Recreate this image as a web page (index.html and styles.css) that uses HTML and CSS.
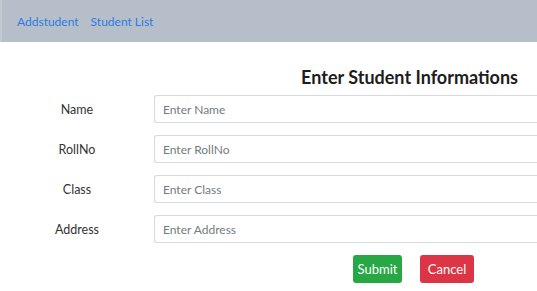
FILE: index.html
```html
<!DOCTYPE html>
<html lang="en">
<head>
    <meta charset="UTF-8">
    <meta name="viewport" content="width=device-width, initial-scale=1.0">
    <title>Add Student</title>
    <link rel="stylesheet" href="styles.css">
</head>
<body>
    <nav class="navbar">
        <a href="#" class="nav-link">Addstudent</a>
        <a href="#" class="nav-link">Student List</a>
    </nav>

    <div class="page">
        <div class="title-row">
            <h4>Enter Student Informations</h4>
        </div>

        <form id="studentForm">
            <div class="form-row">
                <label for="name">Name</label>
                <input type="text" id="name" placeholder="Enter Name">
            </div>
            <div class="form-row">
                <label for="rollno">RollNo</label>
                <input type="text" id="rollno" placeholder="Enter RollNo">
            </div>
            <div class="form-row">
                <label for="class">Class</label>
                <input type="text" id="class" placeholder="Enter Class">
            </div>
            <div class="form-row">
                <label for="address">Address</label>
                <input type="text" id="address" placeholder="Enter Address">
            </div>

            <div class="actions">
                <button type="submit" class="btn btn-success">Submit</button>
                <button type="button" class="btn btn-danger">Cancel</button>
            </div>
        </form>
    </div>
</body>
</html>
```

FILE: styles.css
```css
* {
    margin: 0;
    padding: 0;
    box-sizing: border-box;
}

body {
    font-family: 'Lato', 'Noto Sans', sans-serif;
    font-size: 12.5px;
    color: #333;
    background: white;
}

.navbar {
    height: 42px;
    background: #b6bfc9;
    border-left: 2px solid #c3cad2;
    display: flex;
    align-items: center;
    gap: 12px;
    padding-left: 15px;
}

.nav-link {
    color: #2b7be3;
    text-decoration: none;
    font-size: 12px;
}

.title-row {
    display: flex;
    justify-content: flex-end;
    padding: 23px 19px 0 0;
    height: 53px;
}

.title-row h4 {
    font-size: 18px;
    font-weight: 700;
    color: #1d1d1d;
    line-height: 24px;
}

/* inputs run into the right edge of the window */
.form-row {
    display: grid;
    grid-template-columns: 154px 1fr;
    align-items: center;
    margin-bottom: 12px;
}

.form-row label {
    text-align: center;
    color: #333;
}

.form-row input {
    width: 100%;
    height: 28px;
    padding: 0 8px;
    border: 1px solid #d6dadf;
    border-right: none;
    border-radius: 3px 0 0 3px;
    font-family: inherit;
    font-size: 12px;
    color: #495057;
}

.form-row input::placeholder {
    color: #757b82;
}

.actions {
    display: flex;
    gap: 18px;
    padding-left: 353px;
}

.btn {
    height: 28px;
    border: none;
    border-radius: 3px;
    color: white;
    font-family: inherit;
    font-size: 13px;
    cursor: pointer;
}

.btn-success {
    width: 49px;
    background: #28a745;
}

.btn-danger {
    width: 54px;
    background: #dc3545;
}
```
